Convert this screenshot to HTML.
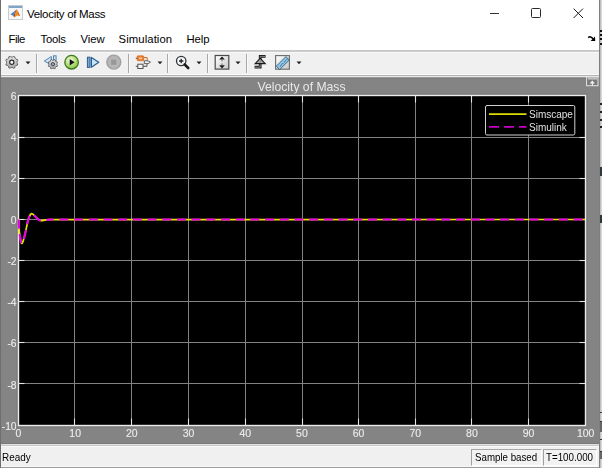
<!DOCTYPE html><html><head><meta charset="utf-8"><style>
*{margin:0;padding:0;box-sizing:border-box}
html,body{width:602px;height:468px;overflow:hidden;background:#fff;font-family:"Liberation Sans",sans-serif}
.a{position:absolute}
.t{position:absolute;white-space:nowrap;line-height:1}
</style></head><body>
<div class="a" style="left:0;top:0;width:602px;height:50px;background:#fff"></div>
<div class="a" style="left:0;top:50px;width:602px;height:1px;background:#c8c8c8"></div>
<div class="a" style="left:0;top:51px;width:602px;height:1px;background:#cccccc"></div>
<div class="a" style="left:0;top:52px;width:602px;height:1px;background:#f8f8f8"></div>
<div class="a" style="left:0;top:53px;width:602px;height:21px;background:#f0f0f0"></div>
<div class="a" style="left:0;top:74px;width:602px;height:1px;background:#fafafa"></div>
<div class="a" style="left:0;top:75px;width:602px;height:1px;background:#b4b4b4"></div>
<div class="a" style="left:0;top:76px;width:602px;height:1px;background:#e8e8e8"></div>
<div class="a" style="left:0;top:77px;width:602px;height:1px;background:#9a9a9a"></div>
<div class="a" style="left:0;top:78px;width:602px;height:1px;background:#7c7c7c"></div>
<div class="a" style="left:0;top:79px;width:602px;height:364px;background:#848484"></div>
<div class="a" style="left:0;top:443px;width:602px;height:1px;background:#7a7a7a"></div>
<div class="a" style="left:0;top:444px;width:602px;height:1px;background:#e0e0e0"></div>
<div class="a" style="left:0;top:445px;width:602px;height:1px;background:#c8c8c8"></div>
<div class="a" style="left:0;top:446px;width:602px;height:1px;background:#f8f8f8"></div>
<div class="a" style="left:0;top:447px;width:602px;height:21px;background:#f0f0f0"></div>
<svg class="a" style="left:8px;top:5px" width="15" height="15" viewBox="0 0 15 15">
<rect x="0.5" y="0.5" width="14" height="14" fill="#f6f7f9" stroke="#c8ccd2"/>
<rect x="1" y="1" width="13" height="2" fill="#80a4c8"/>
<path d="M2.4 9.3 L7.5 5.4 L5.4 11 Z" fill="#3a8ad0"/>
<path d="M7.5 5.4 L8.6 4 L6.4 12.5 L5.4 11 Z" fill="#b03418"/>
<path d="M8.6 4 L12 11 L9.3 10.6 L6.4 12.5 Z" fill="#ec8a22"/>
<path d="M9.2 4.6 L12 11 L10.6 10.2 Z" fill="#d05420"/>
</svg>
<div class="t" style="left:27px;top:8.7px;font-size:11.5px;letter-spacing:-0.3px;color:#000">Velocity of Mass</div>
<div class="a" style="left:490px;top:13px;width:9px;height:1px;background:#333"></div>
<div class="a" style="left:531px;top:8px;width:10px;height:10px;border:1px solid #2a2a2a;border-radius:1.5px"></div>
<svg class="a" style="left:573px;top:8px" width="11" height="11" viewBox="0 0 11 11"><path d="M0.6 0.6 L10 10 M10 0.6 L0.6 10" stroke="#1a1a1a" stroke-width="1"/></svg>
<div class="t" style="left:8.5px;top:34px;font-size:11.3px;letter-spacing:-0.45px;color:#000">File</div>
<div class="t" style="left:40.5px;top:34px;font-size:11.3px;letter-spacing:-0.25px;color:#000">Tools</div>
<div class="t" style="left:80.5px;top:34px;font-size:11.3px;letter-spacing:0px;color:#000">View</div>
<div class="t" style="left:118.5px;top:34px;font-size:11.3px;letter-spacing:0.1px;color:#000">Simulation</div>
<div class="t" style="left:186.5px;top:34px;font-size:11.3px;letter-spacing:-0.1px;color:#000">Help</div>
<svg class="a" style="left:586px;top:32px" width="12" height="12" viewBox="586 32 12 12"><path d="M588.2 37.6 Q590.6 35.6 593 38.8" stroke="#000" stroke-width="1.5" fill="none"/><path d="M590.6 41 L595.2 41 L595 36.6 Z" fill="#000"/></svg>
<svg class="a" style="left:0;top:51px" width="310" height="25" viewBox="0 51 310 25"><defs><radialGradient id="gg" cx="0.4" cy="0.35" r="0.75"><stop offset="0" stop-color="#f4fce8"/><stop offset="0.5" stop-color="#b8e078"/><stop offset="1" stop-color="#78b838"/></radialGradient><linearGradient id="gearg" x1="0" y1="0" x2="0" y2="1"><stop offset="0" stop-color="#e4e4e4"/><stop offset="1" stop-color="#a8a8a8"/></linearGradient><linearGradient id="wg" x1="0" y1="0" x2="1" y2="1"><stop offset="0" stop-color="#ffffff"/><stop offset="1" stop-color="#c8c8c8"/></linearGradient><linearGradient id="bg" x1="0" y1="0" x2="1" y2="0"><stop offset="0" stop-color="#5a90c0"/><stop offset="0.5" stop-color="#b8dcf4"/><stop offset="1" stop-color="#5a90c0"/></linearGradient></defs><polygon points="17.10,62.30 17.02,63.21 17.78,63.94 17.19,65.37 16.14,65.35 15.55,66.05 14.85,66.64 14.87,67.69 13.44,68.28 12.71,67.52 11.80,67.60 10.89,67.52 10.16,68.28 8.73,67.69 8.75,66.64 8.05,66.05 7.46,65.35 6.41,65.37 5.82,63.94 6.58,63.21 6.50,62.30 6.58,61.39 5.82,60.66 6.41,59.23 7.46,59.25 8.05,58.55 8.75,57.96 8.73,56.91 10.16,56.32 10.89,57.08 11.80,57.00 12.71,57.08 13.44,56.32 14.87,56.91 14.85,57.96 15.55,58.55 16.14,59.25 17.19,59.23 17.78,60.66 17.02,61.39" fill="url(#gearg)" stroke="#555" stroke-width="0.9" stroke-linejoin="round"/><circle cx="11.8" cy="62.3" r="2.1" fill="#ffffff" stroke="#2a2a2a" stroke-width="1.2"/><path d="M44.3 61 L51.4 56.5 L51.4 65 Z" fill="#c8e4f8" stroke="#4a7aa8" stroke-width="0.9" stroke-linejoin="round"/><rect x="53.5" y="55.8" width="2.6" height="5.2" fill="#c8e4f8" stroke="#4a7aa8" stroke-width="0.9"/><polygon points="56.95,64.20 56.89,64.90 57.53,65.47 57.07,66.58 56.21,66.53 55.76,67.06 55.23,67.51 55.28,68.37 54.17,68.83 53.60,68.19 52.90,68.25 52.20,68.19 51.63,68.83 50.52,68.37 50.57,67.51 50.04,67.06 49.59,66.53 48.73,66.58 48.27,65.47 48.91,64.90 48.85,64.20 48.91,63.50 48.27,62.93 48.73,61.82 49.59,61.87 50.04,61.34 50.57,60.89 50.52,60.03 51.63,59.57 52.20,60.21 52.90,60.15 53.60,60.21 54.17,59.57 55.28,60.03 55.23,60.89 55.76,61.34 56.21,61.87 57.07,61.82 57.53,62.93 56.89,63.50" fill="url(#gearg)" stroke="#4a4a4a" stroke-width="0.8" stroke-linejoin="round"/><circle cx="52.9" cy="64.2" r="1.7" fill="#8aa8c8" stroke="#3a3a3a" stroke-width="0.9"/><circle cx="71.6" cy="62.2" r="6.8" fill="url(#gg)" stroke="#3e7a22" stroke-width="1.3"/><path d="M69.7 59 L74.6 62.3 L69.7 65.6 Z" fill="#10101a"/><rect x="87.4" y="57.2" width="2.6" height="10.2" fill="#78a8d4" stroke="#2e5e8e" stroke-width="1"/><path d="M91.4 57.4 L98.8 62.3 L91.4 67.2 Z" fill="#c4e4f8" stroke="#2e5e8e" stroke-width="1.2" stroke-linejoin="round"/><circle cx="113.8" cy="62.1" r="7" fill="#b6b6b6" stroke="#a0a0a0" stroke-width="1.4"/><rect x="111.1" y="59.6" width="5.2" height="5.2" fill="#989898"/><rect x="137.2" y="55.8" width="6.5" height="5" rx="0.8" fill="#e87a30" stroke="#d06010" stroke-width="0.6"/><rect x="139" y="57.4" width="3" height="1.8" fill="#f8c8a0"/><path d="M135.8 58.3 L137.2 58.3" stroke="#505050" stroke-width="1"/><path d="M143.7 57.6 L147.2 57.6 L147.2 60.8" stroke="#d86818" stroke-width="1" fill="none"/><path d="M144.3 60.8 L148 60.8 L150.5 62.2 L148 63.6 L144.3 63.6 Z" fill="#f4f4f4" stroke="#505050" stroke-width="0.9"/><rect x="137.8" y="64.2" width="5.2" height="4.3" fill="#f4f4f4" stroke="#505050" stroke-width="1"/><path d="M135.8 66.3 L137.8 66.3 M143 66.3 L147 66.3 L147 63.6" stroke="#505050" stroke-width="1" fill="none"/><circle cx="181.2" cy="61" r="4.7" fill="#f4f8fc" stroke="#333" stroke-width="1.3"/><path d="M179 61 L183.4 61 M181.2 58.8 L181.2 63.2" stroke="#222" stroke-width="1.3"/><path d="M184.6 64.4 L188.2 68" stroke="#1a1a1a" stroke-width="2.6" stroke-linecap="round"/><rect x="215.2" y="55.5" width="13.6" height="13.6" fill="url(#wg)" stroke="#4a4a4a" stroke-width="1.2"/><path d="M219.2 59.6 L222 56.4 L224.8 59.6 Z M219.2 65.2 L222 68.4 L224.8 65.2 Z" fill="#1a1a1a"/><path d="M222 59.3 L222 61.3 M222 63.5 L222 65.5" stroke="#6a6a6a" stroke-width="1.1"/><path d="M265.6 56.4 L260.2 56.4 L260.2 67.2 L254.6 67.2" fill="none" stroke="#1a1a1a" stroke-width="2.7" stroke-linejoin="miter"/><path d="M265.6 56.4 L260.2 56.4 L260.2 67.2 L254.6 67.2" fill="none" stroke="#9a9a9a" stroke-width="0.8" stroke-linejoin="miter"/><path d="M255.2 63.6 L260.2 58.4 L265.2 63.6 Z" fill="#a8a8a8" stroke="#1a1a1a" stroke-width="1.1" stroke-linejoin="miter"/><path d="M260.2 59.5 L260.2 63" stroke="#8a8a8a" stroke-width="0.8"/><rect x="275.6" y="55.6" width="13.8" height="13.6" fill="url(#wg)" stroke="#6a6a6a" stroke-width="1.1"/><path d="M276.3 66.2 L285.9 56.6 L289.3 60 L279.7 69.6 Z" fill="#8cc8ec" stroke="#2a4a60" stroke-width="0.8"/><path d="M280.2 66.2 L281.6 64.8 M282.2 64.2 L283.2 63.2 M284.2 62.2 L285.6 60.8 M286.2 60.2 L287.2 59.2" stroke="#1a3a58" stroke-width="0.9"/></svg>
<div class="a" style="left:36px;top:54px;width:1px;height:19px;background:#a8a8a8"></div><div class="a" style="left:37px;top:54px;width:1px;height:19px;background:#fafafa"></div>
<div class="a" style="left:128px;top:54px;width:1px;height:19px;background:#a8a8a8"></div><div class="a" style="left:129px;top:54px;width:1px;height:19px;background:#fafafa"></div>
<div class="a" style="left:167px;top:54px;width:1px;height:19px;background:#a8a8a8"></div><div class="a" style="left:168px;top:54px;width:1px;height:19px;background:#fafafa"></div>
<div class="a" style="left:207px;top:54px;width:1px;height:19px;background:#a8a8a8"></div><div class="a" style="left:208px;top:54px;width:1px;height:19px;background:#fafafa"></div>
<div class="a" style="left:246px;top:54px;width:1px;height:19px;background:#a8a8a8"></div><div class="a" style="left:247px;top:54px;width:1px;height:19px;background:#fafafa"></div>
<svg class="a" style="left:25.2px;top:61px" width="6" height="4" viewBox="0 0 6 4"><path d="M0.5 0.5 L5.5 0.5 L3 3.2 Z" fill="#202020"/></svg>
<svg class="a" style="left:156.5px;top:61px" width="6" height="4" viewBox="0 0 6 4"><path d="M0.5 0.5 L5.5 0.5 L3 3.2 Z" fill="#202020"/></svg>
<svg class="a" style="left:196px;top:61px" width="6" height="4" viewBox="0 0 6 4"><path d="M0.5 0.5 L5.5 0.5 L3 3.2 Z" fill="#202020"/></svg>
<svg class="a" style="left:235.4px;top:61px" width="6" height="4" viewBox="0 0 6 4"><path d="M0.5 0.5 L5.5 0.5 L3 3.2 Z" fill="#202020"/></svg>
<svg class="a" style="left:295.8px;top:61px" width="6" height="4" viewBox="0 0 6 4"><path d="M0.5 0.5 L5.5 0.5 L3 3.2 Z" fill="#202020"/></svg>
<svg class="a" style="left:0;top:0;will-change:transform" width="602" height="468" viewBox="0 0 602 468">
<text x="301.5" y="90.9" text-anchor="middle" font-family="Liberation Sans" font-size="12.2" fill="#e8e8e8">Velocity of Mass</text>
<rect x="18" y="95" width="567" height="330" fill="#000"/>
<line x1="74.50" y1="95" x2="74.50" y2="425" stroke="#828282" stroke-width="1"/>
<line x1="131.50" y1="95" x2="131.50" y2="425" stroke="#828282" stroke-width="1"/>
<line x1="188.50" y1="95" x2="188.50" y2="425" stroke="#828282" stroke-width="1"/>
<line x1="245.50" y1="95" x2="245.50" y2="425" stroke="#828282" stroke-width="1"/>
<line x1="302.50" y1="95" x2="302.50" y2="425" stroke="#828282" stroke-width="1"/>
<line x1="358.50" y1="95" x2="358.50" y2="425" stroke="#828282" stroke-width="1"/>
<line x1="415.50" y1="95" x2="415.50" y2="425" stroke="#828282" stroke-width="1"/>
<line x1="471.50" y1="95" x2="471.50" y2="425" stroke="#828282" stroke-width="1"/>
<line x1="528.50" y1="95" x2="528.50" y2="425" stroke="#828282" stroke-width="1"/>
<line x1="18" y1="137.50" x2="585" y2="137.50" stroke="#828282" stroke-width="1"/>
<line x1="18" y1="178.50" x2="585" y2="178.50" stroke="#828282" stroke-width="1"/>
<line x1="18" y1="219.50" x2="585" y2="219.50" stroke="#828282" stroke-width="1"/>
<line x1="18" y1="260.50" x2="585" y2="260.50" stroke="#828282" stroke-width="1"/>
<line x1="18" y1="301.50" x2="585" y2="301.50" stroke="#828282" stroke-width="1"/>
<line x1="18" y1="342.50" x2="585" y2="342.50" stroke="#828282" stroke-width="1"/>
<line x1="18" y1="383.50" x2="585" y2="383.50" stroke="#828282" stroke-width="1"/>
<line x1="74.50" y1="95" x2="74.50" y2="102.5" stroke="#e4e4e4" stroke-width="1.1"/>
<line x1="74.50" y1="426" x2="74.50" y2="418.5" stroke="#e4e4e4" stroke-width="1.1"/>
<line x1="131.50" y1="95" x2="131.50" y2="102.5" stroke="#e4e4e4" stroke-width="1.1"/>
<line x1="131.50" y1="426" x2="131.50" y2="418.5" stroke="#e4e4e4" stroke-width="1.1"/>
<line x1="188.50" y1="95" x2="188.50" y2="102.5" stroke="#e4e4e4" stroke-width="1.1"/>
<line x1="188.50" y1="426" x2="188.50" y2="418.5" stroke="#e4e4e4" stroke-width="1.1"/>
<line x1="245.50" y1="95" x2="245.50" y2="102.5" stroke="#e4e4e4" stroke-width="1.1"/>
<line x1="245.50" y1="426" x2="245.50" y2="418.5" stroke="#e4e4e4" stroke-width="1.1"/>
<line x1="302.50" y1="95" x2="302.50" y2="102.5" stroke="#e4e4e4" stroke-width="1.1"/>
<line x1="302.50" y1="426" x2="302.50" y2="418.5" stroke="#e4e4e4" stroke-width="1.1"/>
<line x1="358.50" y1="95" x2="358.50" y2="102.5" stroke="#e4e4e4" stroke-width="1.1"/>
<line x1="358.50" y1="426" x2="358.50" y2="418.5" stroke="#e4e4e4" stroke-width="1.1"/>
<line x1="415.50" y1="95" x2="415.50" y2="102.5" stroke="#e4e4e4" stroke-width="1.1"/>
<line x1="415.50" y1="426" x2="415.50" y2="418.5" stroke="#e4e4e4" stroke-width="1.1"/>
<line x1="471.50" y1="95" x2="471.50" y2="102.5" stroke="#e4e4e4" stroke-width="1.1"/>
<line x1="471.50" y1="426" x2="471.50" y2="418.5" stroke="#e4e4e4" stroke-width="1.1"/>
<line x1="528.50" y1="95" x2="528.50" y2="102.5" stroke="#e4e4e4" stroke-width="1.1"/>
<line x1="528.50" y1="426" x2="528.50" y2="418.5" stroke="#e4e4e4" stroke-width="1.1"/>
<line x1="18" y1="137.50" x2="24.5" y2="137.50" stroke="#e4e4e4" stroke-width="1.1"/>
<line x1="586" y1="137.50" x2="579.5" y2="137.50" stroke="#e4e4e4" stroke-width="1.1"/>
<line x1="18" y1="178.50" x2="24.5" y2="178.50" stroke="#e4e4e4" stroke-width="1.1"/>
<line x1="586" y1="178.50" x2="579.5" y2="178.50" stroke="#e4e4e4" stroke-width="1.1"/>
<line x1="18" y1="219.50" x2="24.5" y2="219.50" stroke="#e4e4e4" stroke-width="1.1"/>
<line x1="586" y1="219.50" x2="579.5" y2="219.50" stroke="#e4e4e4" stroke-width="1.1"/>
<line x1="18" y1="260.50" x2="24.5" y2="260.50" stroke="#e4e4e4" stroke-width="1.1"/>
<line x1="586" y1="260.50" x2="579.5" y2="260.50" stroke="#e4e4e4" stroke-width="1.1"/>
<line x1="18" y1="301.50" x2="24.5" y2="301.50" stroke="#e4e4e4" stroke-width="1.1"/>
<line x1="586" y1="301.50" x2="579.5" y2="301.50" stroke="#e4e4e4" stroke-width="1.1"/>
<line x1="18" y1="342.50" x2="24.5" y2="342.50" stroke="#e4e4e4" stroke-width="1.1"/>
<line x1="586" y1="342.50" x2="579.5" y2="342.50" stroke="#e4e4e4" stroke-width="1.1"/>
<line x1="18" y1="383.50" x2="24.5" y2="383.50" stroke="#e4e4e4" stroke-width="1.1"/>
<line x1="586" y1="383.50" x2="579.5" y2="383.50" stroke="#e4e4e4" stroke-width="1.1"/>
<rect x="17" y="94" width="570" height="333" fill="none" stroke="#787878" stroke-width="1"/>
<rect x="18.5" y="95.5" width="567" height="330" fill="none" stroke="#ececec" stroke-width="1.4"/>
<text x="16.6" y="99.90" text-anchor="end" font-family="Liberation Sans" font-size="10.3" fill="#ececec" stroke="#ececec" stroke-width="0.12">6</text>
<text x="16.6" y="141.15" text-anchor="end" font-family="Liberation Sans" font-size="10.3" fill="#ececec" stroke="#ececec" stroke-width="0.12">4</text>
<text x="16.6" y="182.40" text-anchor="end" font-family="Liberation Sans" font-size="10.3" fill="#ececec" stroke="#ececec" stroke-width="0.12">2</text>
<text x="16.6" y="223.65" text-anchor="end" font-family="Liberation Sans" font-size="10.3" fill="#ececec" stroke="#ececec" stroke-width="0.12">0</text>
<text x="16.6" y="264.90" text-anchor="end" font-family="Liberation Sans" font-size="10.3" fill="#ececec" stroke="#ececec" stroke-width="0.12">-2</text>
<text x="16.6" y="306.15" text-anchor="end" font-family="Liberation Sans" font-size="10.3" fill="#ececec" stroke="#ececec" stroke-width="0.12">-4</text>
<text x="16.6" y="347.40" text-anchor="end" font-family="Liberation Sans" font-size="10.3" fill="#ececec" stroke="#ececec" stroke-width="0.12">-6</text>
<text x="16.6" y="388.65" text-anchor="end" font-family="Liberation Sans" font-size="10.3" fill="#ececec" stroke="#ececec" stroke-width="0.12">-8</text>
<text x="16.6" y="429.90" text-anchor="end" font-family="Liberation Sans" font-size="10.3" fill="#ececec" stroke="#ececec" stroke-width="0.12">-10</text>
<text x="18.50" y="437.2" text-anchor="middle" font-family="Liberation Sans" font-size="10.5" fill="#ececec" stroke="#ececec" stroke-width="0.12">0</text>
<text x="75.18" y="437.2" text-anchor="middle" font-family="Liberation Sans" font-size="10.5" fill="#ececec" stroke="#ececec" stroke-width="0.12">10</text>
<text x="131.86" y="437.2" text-anchor="middle" font-family="Liberation Sans" font-size="10.5" fill="#ececec" stroke="#ececec" stroke-width="0.12">20</text>
<text x="188.54" y="437.2" text-anchor="middle" font-family="Liberation Sans" font-size="10.5" fill="#ececec" stroke="#ececec" stroke-width="0.12">30</text>
<text x="245.22" y="437.2" text-anchor="middle" font-family="Liberation Sans" font-size="10.5" fill="#ececec" stroke="#ececec" stroke-width="0.12">40</text>
<text x="301.90" y="437.2" text-anchor="middle" font-family="Liberation Sans" font-size="10.5" fill="#ececec" stroke="#ececec" stroke-width="0.12">50</text>
<text x="358.58" y="437.2" text-anchor="middle" font-family="Liberation Sans" font-size="10.5" fill="#ececec" stroke="#ececec" stroke-width="0.12">60</text>
<text x="415.26" y="437.2" text-anchor="middle" font-family="Liberation Sans" font-size="10.5" fill="#ececec" stroke="#ececec" stroke-width="0.12">70</text>
<text x="471.94" y="437.2" text-anchor="middle" font-family="Liberation Sans" font-size="10.5" fill="#ececec" stroke="#ececec" stroke-width="0.12">80</text>
<text x="528.62" y="437.2" text-anchor="middle" font-family="Liberation Sans" font-size="10.5" fill="#ececec" stroke="#ececec" stroke-width="0.12">90</text>
<text x="585.70" y="437.2" text-anchor="middle" font-family="Liberation Sans" font-size="10.5" fill="#ececec" stroke="#ececec" stroke-width="0.12">100</text>
<path d="M18.7,219.5 C18.82,221.58 18.90,228.03 19.4,232 C19.90,235.97 20.83,242.63 21.7,243.3 C22.57,243.97 23.50,239.97 24.6,236 C25.70,232.03 27.18,223.22 28.3,219.5 C29.42,215.78 30.25,214.32 31.3,213.7 C32.35,213.08 33.48,214.87 34.6,215.8 C35.72,216.73 36.90,218.48 38,219.3 C39.10,220.12 40.07,220.55 41.2,220.7 C42.33,220.85 43.50,220.38 44.8,220.2 C46.10,220.02 48.30,219.70 49,219.6 L585,219.5" fill="none" stroke="#e4e400" stroke-width="1.7"/>
<path d="M18.7,219.5 C18.82,221.58 18.90,228.03 19.4,232 C19.90,235.97 20.83,242.63 21.7,243.3 C22.57,243.97 23.50,239.97 24.6,236 C25.70,232.03 27.18,223.22 28.3,219.5 C29.42,215.78 30.25,214.32 31.3,213.7 C32.35,213.08 33.48,214.87 34.6,215.8 C35.72,216.73 36.90,218.48 38,219.3 C39.10,220.12 40.07,220.55 41.2,220.7 C42.33,220.85 43.50,220.38 44.8,220.2 C46.10,220.02 48.30,219.70 49,219.6" fill="none" stroke="#e800e8" stroke-width="2.1" stroke-dasharray="9 5.69" stroke-dashoffset="0"/>
<path d="M49,219.6 L52,219.5 L585,219.5" fill="none" stroke="#e800e8" stroke-width="2.1" stroke-dasharray="9 5.69" stroke-dashoffset="4.28"/>
<rect x="485.5" y="105.5" width="89.3" height="29.5" rx="1.5" fill="#000" stroke="#d0d0d0" stroke-width="1"/>
<line x1="489" y1="114.1" x2="526.5" y2="114.1" stroke="#dcdc00" stroke-width="1.7"/>
<line x1="489" y1="126.9" x2="526.5" y2="126.9" stroke="#c800c8" stroke-width="1.7" stroke-dasharray="10 5"/>
<text x="529" y="118.3" font-family="Liberation Sans" font-size="10" fill="#e0e0e0">Simscape</text>
<text x="529" y="131.3" font-family="Liberation Sans" font-size="10" fill="#e0e0e0">Simulink</text>
<rect x="586.6" y="77.1" width="11.4" height="8.6" fill="#7a7a7a" stroke="#e4e4e4" stroke-width="1"/>
<path d="M588 78.9 L597 78.9" stroke="#e8e8e8" stroke-width="1"/>
<path d="M589.6 83.4 L592.3 80.4 L595 83.4 Z" fill="#f4f4f4"/><rect x="591.8" y="82" width="1.1" height="3.8" fill="#f4f4f4"/>
</svg>
<div class="t" style="left:2px;top:451.7px;font-size:10.7px;color:#000;transform:scaleX(0.93);transform-origin:0 0">Ready</div>
<div class="a" style="left:471px;top:449px;width:71px;height:17px;border-left:1px solid #a0a0a0;border-top:1px solid #a8a8a8;border-right:1px solid #fff;border-bottom:1px solid #fff;background:#f2f2f2"></div>
<div class="t" style="left:474.5px;top:451.7px;font-size:10.7px;color:#000;transform:scaleX(0.91);transform-origin:0 0">Sample based</div>
<div class="a" style="left:543px;top:449px;width:54px;height:17px;border-left:1px solid #a0a0a0;border-top:1px solid #a8a8a8;border-right:1px solid #fff;border-bottom:1px solid #fff;background:#f2f2f2"></div>
<div class="t" style="left:545.5px;top:451.7px;font-size:10.7px;color:#000;transform:scaleX(0.915);transform-origin:0 0">T=100.000</div>
<div class="a" style="left:0;top:466px;width:602px;height:1px;background:#f8f8f8"></div>
<div class="a" style="left:0;top:467px;width:602px;height:1px;background:#9c9c9c"></div>
<div class="a" style="left:0;top:0;width:1px;height:468px;background:#6e6e6e"></div>
<div class="a" style="left:599px;top:0;width:1px;height:468px;background:#7e7e7e"></div>
<div class="a" style="left:600px;top:0;width:1px;height:468px;background:#c0c0c0"></div>
<div class="a" style="left:601px;top:0;width:1px;height:468px;background:#d8d8d8"></div>
<div class="a" style="left:600px;top:30px;width:2px;height:2px;background:#111"></div>
<div class="a" style="left:600px;top:34px;width:2px;height:2px;background:#111"></div>
<div class="a" style="left:600px;top:38px;width:2px;height:2px;background:#111"></div>
<div class="a" style="left:600px;top:43px;width:2px;height:2px;background:#111"></div>
<div class="a" style="left:600px;top:103px;width:2px;height:2px;background:#222"></div>
<div class="a" style="left:600px;top:111px;width:2px;height:2px;background:#222"></div>
<div class="a" style="left:600px;top:119px;width:2px;height:2px;background:#222"></div>
<div class="a" style="left:600px;top:125.5px;width:2px;height:2px;background:#222"></div>
<div class="a" style="left:600px;top:166.5px;width:2px;height:9px;background:#2a3a3a"></div>
<div class="a" style="left:600px;top:215px;width:2px;height:8px;background:#2a3a3a"></div>
<div class="a" style="left:600px;top:411.5px;width:2px;height:1.2px;background:#333"></div>
<div class="a" style="left:600px;top:421px;width:2px;height:1.5px;background:#333"></div>
<div class="a" style="left:600px;top:422px;width:2px;height:10px;background:#666"></div>
<div class="a" style="left:600px;top:439px;width:2px;height:1.2px;background:#333"></div>
<div class="a" style="left:600px;top:451px;width:2px;height:1.5px;background:#333"></div>
<div class="a" style="left:600px;top:452px;width:2px;height:7px;background:#666"></div>
</body></html>
